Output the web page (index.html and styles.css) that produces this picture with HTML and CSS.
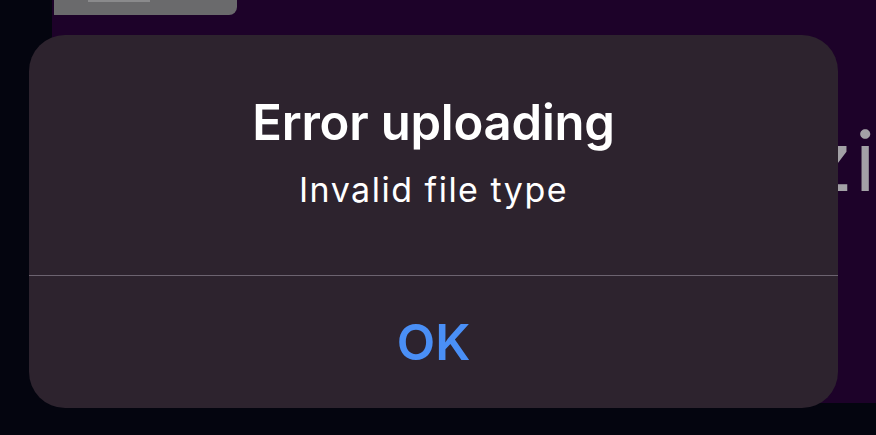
FILE: index.html
```html
<!DOCTYPE html>
<html>
<head>
<meta charset="utf-8">
<link rel="stylesheet" href="styles.css">
</head>
<body>
<div class="screen">
  <div class="panel">
    <div class="pill"><div class="pill-bar"></div></div>
    <div class="bg-row"><span class="bg-text">zic</span></div>
  </div>
  <div class="dialog">
    <div class="dialog-body">
      <div class="title">Error uploading</div>
      <div class="message">Invalid file type</div>
    </div>
    <div class="divider"></div>
    <div class="action">OK</div>
  </div>
</div>
</body>
</html>
```
FILE: styles.css
```css
html, body {
  margin: 0;
  padding: 0;
  width: 876px;
  height: 435px;
  overflow: hidden;
  background: #04050f;
  font-family: Inter, "Noto Sans", sans-serif;
}
.screen {
  position: relative;
  width: 876px;
  height: 435px;
  padding-left: 52px;
  box-sizing: border-box;
}
.panel {
  height: 403px;
  background: #1d0229;
  overflow: hidden;
  display: flex;
  flex-direction: column;
}
.pill {
  width: 183px;
  height: 15px;
  margin-left: 2px;
  background: #6a6a6c;
  border-radius: 0 0 8px 0;
  display: flex;
}
.pill-bar {
  width: 62px;
  height: 2px;
  margin-left: 34px;
  background: #8a8a8c;
}
.bg-row {
  display: flex;
  margin-top: 106px;
  padding-left: 755px;
}
.bg-text {
  font-size: 82px;
  line-height: 1;
  color: #a3a1a6;
  white-space: nowrap;
  letter-spacing: 3px;
}
.dialog {
  position: absolute;
  left: 29px;
  top: 35px;
  width: 809px;
  height: 373px;
  background: #2d232e;
  border-radius: 36px;
  display: flex;
  flex-direction: column;
  color: #ffffff;
}
.dialog-body {
  height: 240px;
  box-sizing: border-box;
  padding-top: 61px;
  display: flex;
  flex-direction: column;
  align-items: center;
}
.title {
  font-size: 49px;
  font-weight: 600;
  line-height: 54px;
  letter-spacing: -0.2px;
}
.message {
  font-size: 34px;
  font-weight: 400;
  line-height: 40px;
  margin-top: 20px;
  letter-spacing: 1.5px;
}
.divider {
  height: 1px;
  background: #6c6370;
}
.action {
  flex: 1;
  display: flex;
  align-items: center;
  justify-content: center;
  color: #4a8ff6;
  font-size: 50px;
  font-weight: 600;
}
```
